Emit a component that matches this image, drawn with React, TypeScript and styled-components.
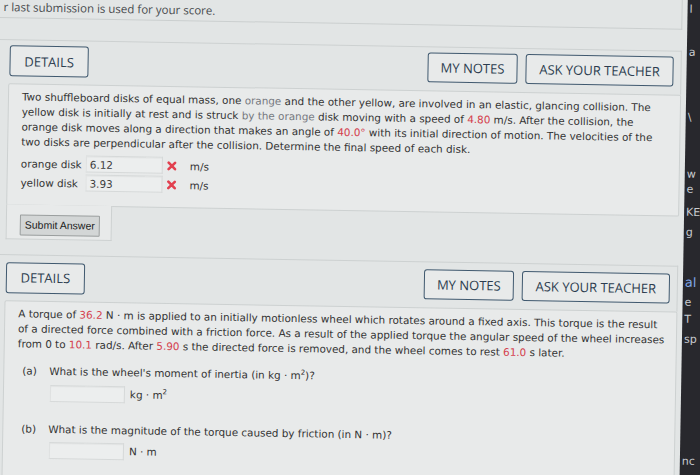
import React from "react";
import styled, { createGlobalStyle } from "styled-components";

const GlobalStyle = createGlobalStyle`
  html, body {
    margin: 0;
    padding: 0;
    background: #e2e5e5;
    overflow: hidden;
  }
  body {
    width: 700px;
    height: 475px;
  }
`;

const Page = styled.div`
  display: flex;
  align-items: stretch;
  width: 760px;
  height: 540px;
  margin-top: -20px;
  transform: rotate(0.98deg);
  transform-origin: 0 0;
  font-family: "DejaVu Sans", Verdana, sans-serif;
  color: #333;
`;

const MainColumn = styled.div`
  display: flex;
  flex-direction: column;
  width: 688px;
  flex: none;
  background: #e2e5e5;
`;

const TopPanel = styled.div`
  box-sizing: border-box;
  width: 683px;
  height: 38px;
  padding: 16px 0 0 4px;
  border-top: 3px solid #2a2a2f;
  border-right: 1px solid #cbcfcf;
  border-bottom: 1px solid #cbcfcf;
  font-family: "Open Sans", sans-serif;
  font-size: 11.5px;
  line-height: 16px;
  color: #474a4d;
  white-space: nowrap;
`;

const QBlock = styled.section<{ $mt: number }>`
  display: flex;
  flex-direction: column;
  width: 683px;
  margin-top: ${(p) => p.$mt}px;
`;

const Header = styled.div<{ $pt: number }>`
  display: flex;
  justify-content: space-between;
  align-items: flex-start;
  padding: ${(p) => p.$pt}px 7px 7px 11px;
  border-top: 1px solid #cdd1d1;
  border-right: 1px solid #cdd1d1;
`;

const ButtonGroup = styled.div`
  display: flex;
  gap: 8px;
`;

const HeaderButton = styled.div<{ $w: number; $h: number }>`
  box-sizing: border-box;
  display: flex;
  align-items: center;
  justify-content: center;
  width: ${(p) => p.$w}px;
  height: ${(p) => p.$h}px;
  border: 1.5px solid #40596f;
  border-radius: 3px;
  background: #e8eaea;
  font-family: "Open Sans", sans-serif;
  font-size: 13px;
  font-weight: 500;
  color: #2c3d4f;
  white-space: nowrap;
`;

const Body = styled.div<{ $pb: number }>`
  box-sizing: border-box;
  width: 673px;
  margin-left: 10px;
  padding: 5px 12px ${(p) => p.$pb}px 13px;
  border: 1px solid #cdd1d1;
  border-radius: 2px;
  background: #e8eaea;
  font-size: 10.4px;
`;

const Line = styled.div`
  line-height: 15px;
  white-space: nowrap;
`;

const Val = styled.span`
  color: #d4404d;
`;

const Faded = styled.span`
  color: #75787e;
`;

const Sup = styled.sup`
  font-size: 7px;
  line-height: 0;
`;

const AnswerList = styled.div`
  display: flex;
  flex-direction: column;
  margin-top: 4px;
`;

const AnswerRow = styled.div`
  display: flex;
  align-items: center;
  height: 19px;
`;

const AnswerLabel = styled.span`
  width: 65px;
  white-space: nowrap;
`;

const InputBox = styled.div<{ $w: number }>`
  box-sizing: border-box;
  display: flex;
  align-items: center;
  width: ${(p) => p.$w}px;
  height: 17px;
  padding-left: 3px;
  border: 1px solid #d6d9d9;
  border-left-color: #dfe1e1;
  background: #eceeee;
  box-shadow: inset 0 1px 1px rgba(0, 0, 0, 0.04);
  font-size: 10.4px;
  color: #3a3a3a;
`;

const Mark = styled.svg`
  margin-left: 4px;
  flex: none;
`;

const Unit = styled.span<{ $ml: number }>`
  margin-left: ${(p) => p.$ml}px;
  white-space: nowrap;
`;

const SubmitTab = styled.div`
  position: relative;
  box-sizing: border-box;
  width: 106px;
  margin-left: 10px;
  margin-top: -1px;
  padding: 9px 0 3px 13px;
  border: 1px solid #cdd1d1;
  border-top: none;
  background: #e8eaea;
`;

const SubmitButton = styled.button`
  box-sizing: border-box;
  width: 80px;
  height: 21px;
  padding: 0;
  border: 1px solid #9a9e9e;
  border-radius: 1px;
  background: #d3d6d6;
  font-family: "Liberation Sans", Arial, sans-serif;
  font-size: 10.5px;
  color: #222;
`;

const PartQuestion = styled.div<{ $mt: number }>`
  display: flex;
  margin-top: ${(p) => p.$mt}px;
  margin-left: 5px;
  line-height: 15px;
  white-space: nowrap;
`;

const PartLabel = styled.span`
  width: 27px;
  flex: none;
`;

const PartAnswer = styled.div<{ $mt: number }>`
  display: flex;
  align-items: center;
  margin-top: ${(p) => p.$mt}px;
  margin-left: 33px;
  height: 17px;
`;

const Strip = styled.div`
  display: flex;
  flex-direction: column;
  width: 72px;
  flex: none;
  padding-left: 2px;
  background: #28282d;
  font-family: "DejaVu Sans", sans-serif;
  font-size: 11px;
  color: #c9ccd1;
  overflow: hidden;
`;

const Frag = styled.div<{ $mt: number; $blue?: boolean }>`
  margin-top: ${(p) => p.$mt}px;
  height: 12px;
  line-height: 12px;
  font-size: ${(p) => (p.$blue ? 13 : 11)}px;
  color: ${(p) => (p.$blue ? "#7fa6e6" : "#c9ccd1")};
  white-space: nowrap;
`;

const XMark = () => (
  <Mark width="10" height="10" viewBox="0 0 10 10">
    <path d="M1.8 1.8 L8.2 8.2 M8.2 1.8 L1.8 8.2" stroke="#e2404f" strokeWidth="2.6" strokeLinecap="round" />
  </Mark>
);

const fragments: { t: string; mt: number; blue?: boolean }[] = [
  { t: "l", mt: 12 },
  { t: "a", mt: 31 },
  { t: "\\", mt: 53 },
  { t: "w", mt: 45 },
  { t: "e", mt: 3 },
  { t: "KE", mt: 11 },
  { t: "g", mt: 8 },
  { t: "al", mt: 38, blue: true },
  { t: "e", mt: 8 },
  { t: "T", mt: 5 },
  { t: "sp", mt: 8 },
  { t: "nc", mt: 110 },
];

const QuestionHeader = ({ pt }: { pt: number }) => (
  <Header $pt={pt}>
    <HeaderButton $w={79} $h={31}>DETAILS</HeaderButton>
    <ButtonGroup>
      <HeaderButton $w={90} $h={30}>MY NOTES</HeaderButton>
      <HeaderButton $w={148} $h={30}>ASK YOUR TEACHER</HeaderButton>
    </ButtonGroup>
  </Header>
);

export default function App() {
  return (
    <>
      <GlobalStyle />
      <Page>
        <MainColumn>
          <TopPanel>r last submission is used for your score.</TopPanel>

          <QBlock $mt={21}>
            <QuestionHeader pt={5} />
            <Body $pb={13}>
              <Line>
                Two shuffleboard disks of equal mass, one <Faded>orange</Faded> and the other yellow, are involved in an elastic, glancing collision. The
              </Line>
              <Line>
                yellow disk is initially at rest and is struck <Faded>by the orange</Faded> disk moving with a speed of <Val>4.80</Val> m/s. After the collision, the
              </Line>
              <Line>
                orange disk moves along a direction that makes an angle of <Val>40.0°</Val> with its initial direction of motion. The velocities of the
              </Line>
              <Line>two disks are perpendicular after the collision. Determine the final speed of each disk.</Line>
              <AnswerList>
                <AnswerRow>
                  <AnswerLabel>orange disk</AnswerLabel>
                  <InputBox $w={77}>6.12</InputBox>
                  <XMark />
                  <Unit $ml={13}>m/s</Unit>
                </AnswerRow>
                <AnswerRow>
                  <AnswerLabel>yellow disk</AnswerLabel>
                  <InputBox $w={77}>3.93</InputBox>
                  <XMark />
                  <Unit $ml={13}>m/s</Unit>
                </AnswerRow>
              </AnswerList>
            </Body>
            <SubmitTab>
              <SubmitButton>Submit Answer</SubmitButton>
            </SubmitTab>
          </QBlock>

          <QBlock $mt={15}>
            <QuestionHeader pt={7} />
            <Body $pb={60}>
              <Line>
                A torque of <Val>36.2</Val> N · m is applied to an initially motionless wheel which rotates around a fixed axis. This torque is the result
              </Line>
              <Line>
                of a directed force combined with a friction force. As a result of the applied torque the angular speed of the wheel increases
              </Line>
              <Line>
                from 0 to <Val>10.1</Val> rad/s. After <Val>5.90</Val> s the directed force is removed, and the wheel comes to rest <Val>61.0</Val> s later.
              </Line>
              <PartQuestion $mt={12}>
                <PartLabel>(a)</PartLabel>
                <span>
                  What is the wheel's moment of inertia (in kg · m<Sup>2</Sup>)?
                </span>
              </PartQuestion>
              <PartAnswer $mt={6}>
                <InputBox $w={75} />
                <Unit $ml={5}>
                  kg · m<Sup>2</Sup>
                </Unit>
              </PartAnswer>
              <PartQuestion $mt={20}>
                <PartLabel>(b)</PartLabel>
                <span>What is the magnitude of the torque caused by friction (in N · m)?</span>
              </PartQuestion>
              <PartAnswer $mt={5}>
                <InputBox $w={75} />
                <Unit $ml={5}>N · m</Unit>
              </PartAnswer>
            </Body>
          </QBlock>
        </MainColumn>
        <Strip>
          {fragments.map((f, i) => (
            <Frag key={i} $mt={f.mt} $blue={f.blue}>
              {f.t}
            </Frag>
          ))}
        </Strip>
      </Page>
    </>
  );
}
